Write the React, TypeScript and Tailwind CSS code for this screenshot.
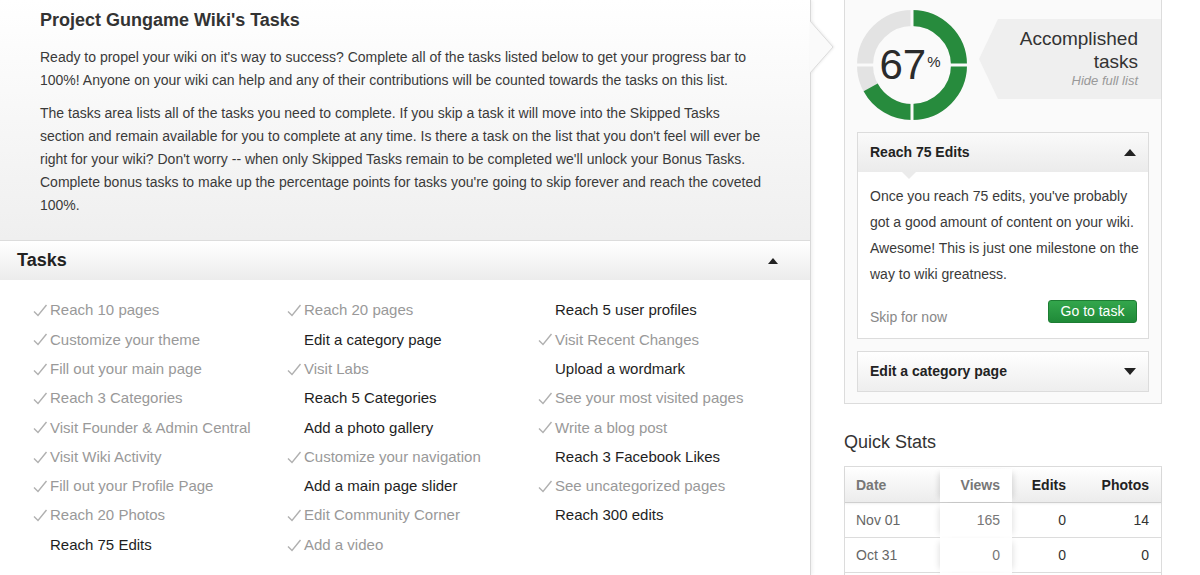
import React from 'react';

type Task = { label: string; done: boolean };

const columns: Task[][] = [
  [
    { label: 'Reach 10 pages', done: true },
    { label: 'Customize your theme', done: true },
    { label: 'Fill out your main page', done: true },
    { label: 'Reach 3 Categories', done: true },
    { label: 'Visit Founder & Admin Central', done: true },
    { label: 'Visit Wiki Activity', done: true },
    { label: 'Fill out your Profile Page', done: true },
    { label: 'Reach 20 Photos', done: true },
    { label: 'Reach 75 Edits', done: false },
  ],
  [
    { label: 'Reach 20 pages', done: true },
    { label: 'Edit a category page', done: false },
    { label: 'Visit Labs', done: true },
    { label: 'Reach 5 Categories', done: false },
    { label: 'Add a photo gallery', done: false },
    { label: 'Customize your navigation', done: true },
    { label: 'Add a main page slider', done: false },
    { label: 'Edit Community Corner', done: true },
    { label: 'Add a video', done: true },
  ],
  [
    { label: 'Reach 5 user profiles', done: false },
    { label: 'Visit Recent Changes', done: true },
    { label: 'Upload a wordmark', done: false },
    { label: 'See your most visited pages', done: true },
    { label: 'Write a blog post', done: true },
    { label: 'Reach 3 Facebook Likes', done: false },
    { label: 'See uncategorized pages', done: true },
    { label: 'Reach 300 edits', done: false },
  ],
];

const stats = [
  { date: 'Nov 01', views: 165, edits: 0, photos: 14 },
  { date: 'Oct 31', views: 0, edits: 0, photos: 0 },
];

function Check() {
  return (
    <svg width="15" height="13" viewBox="0 0 15 13" className="shrink-0">
      <path d="M1 7.5 L5 11.5 L13.5 1" fill="none" stroke="#b0b0b0" strokeWidth="1.4" />
    </svg>
  );
}

function Triangle({ up }: { up: boolean }) {
  return (
    <svg width="12" height="7" viewBox="0 0 12 7">
      <polygon points={up ? '0,7 6,0 12,7' : '0,0 12,0 6,7'} fill="#222" />
    </svg>
  );
}

function Donut() {
  const c = 2 * Math.PI * 47;
  return (
    <div className="relative w-[110px] h-[110px] shrink-0">
      <svg width="110" height="110" viewBox="0 0 110 110">
        <circle cx="55" cy="55" r="47" fill="none" stroke="#e3e3e3" strokeWidth="16" />
        <circle
          cx="55"
          cy="55"
          r="47"
          fill="none"
          stroke="#278b3d"
          strokeWidth="16"
          strokeDasharray={`${c * 0.67} ${c}`}
          transform="rotate(-90 55 55)"
        />
        <rect x="53.5" y="0" width="3" height="110" fill="#fafafa" />
        <rect x="0" y="53.5" width="110" height="3" fill="#fafafa" />
        <circle cx="55" cy="55" r="38" fill="#fafafa" />
      </svg>
      <div className="absolute inset-0 flex items-center justify-center text-[#2b2b2b]">
        <span className="text-[42px] leading-[42px] -ml-[4px]">67</span>
        <span className="text-[15px] leading-[15px] self-start mt-[44px] ml-[1px]">%</span>
      </div>
    </div>
  );
}

export default function App() {
  return (
    <div className="flex w-[1200px] h-[575px] overflow-hidden bg-white font-['Liberation_Sans',Arial,sans-serif] text-[#333]">
      {/* Left: intro + task list */}
      <div className="relative w-[811px] shrink-0 border-r border-[#d8d8d8] shadow-[1px_0_4px_rgba(0,0,0,0.08)]">
        <div className="h-[241px] pl-[40px] pr-[20px] pt-[9px] bg-gradient-to-b from-white to-[#efefef] border-b border-[#dcdcdc]">
          <h1 className="text-[18px] leading-[22px] font-bold text-[#333] mb-[15px]">Project Gungame Wiki's Tasks</h1>
          <p className="text-[14px] leading-[23px] text-[#3a3a3a]">
            Ready to propel your wiki on it's way to success? Complete all of the tasks listed below to get your progress bar to
            <br />
            100%! Anyone on your wiki can help and any of their contributions will be counted towards the tasks on this list.
          </p>
          <p className="text-[14px] leading-[23px] text-[#3a3a3a] mt-[10px]">
            The tasks area lists all of the tasks you need to complete. If you skip a task it will move into the Skipped Tasks
            <br />
            section and remain available for you to complete at any time. Is there a task on the list that you don't feel will ever be
            <br />
            right for your wiki? Don't worry -- when only Skipped Tasks remain to be completed we'll unlock your Bonus Tasks.
            <br />
            Complete bonus tasks to make up the percentage points for tasks you're going to skip forever and reach the coveted
            <br />
            100%.
          </p>
        </div>

        {/* Tasks bar */}
        <div className="h-[39px] flex items-center justify-between pl-[17px] pr-[32px] bg-gradient-to-b from-white to-[#ececec]">
          <h2 className="text-[18px] font-bold text-[#222]">Tasks</h2>
          <svg width="10" height="6" viewBox="0 0 10 6">
            <polygon points="0,6 5,0 10,6" fill="#222" />
          </svg>
        </div>

        <div className="flex pl-[33px] pt-[16px]">
          {columns.map((col, i) => (
            <div key={i} className={i === 0 ? 'w-[254px]' : i === 1 ? 'w-[251px]' : 'flex-1'}>
              {col.map((t) => (
                <div key={t.label} className="h-[29.3px] flex items-center text-[15px]">
                  <span className="w-[17px] shrink-0 flex items-center">{t.done && <Check />}</span>
                  <span className={t.done ? 'text-[#999]' : 'text-[#1e1e1e]'}>{t.label}</span>
                </div>
              ))}
            </div>
          ))}
        </div>

        {/* pointer into the side panel */}
        <svg
          width="24"
          height="52"
          viewBox="0 0 24 52"
          className="absolute left-[810px] top-[21px] drop-shadow-[1px_0_1px_rgba(0,0,0,0.08)]"
        >
          <polygon points="0,0 23,26 0,52" fill="#fafafa" />
          <polyline points="0,0 23,26 0,52" fill="none" stroke="#dcdcdc" strokeWidth="1" />
        </svg>
      </div>

      {/* Right side panel */}
      <div className="ml-[33px] w-[318px] shrink-0">
        <div className="bg-[#fafafa] border border-t-0 border-[#dcdcdc] pb-[11px]">
          <div className="flex items-start pt-[10px] pl-[12px]">
            <Donut />
            <div className="flex-1 ml-[12px] mt-[9px] h-[80px] flex">
              <svg width="19" height="80" viewBox="0 0 19 80" className="shrink-0">
                <polygon points="19,0 0,40 19,80" fill="#efefef" />
              </svg>
              <div className="flex-1 bg-[#efefef] text-right pr-[23px] pt-[8px]">
                <div className="text-[19px] leading-[23px] text-[#333]">Accomplished</div>
                <div className="text-[19px] leading-[23px] text-[#333]">tasks</div>
                <div className="text-[13px] leading-[16px] italic text-[#999]">Hide full list</div>
              </div>
            </div>
          </div>

          {/* Current task */}
          <div className="mx-[12px] mt-[12px] border border-[#dcdcdc] bg-white">
            <div className="relative h-[39px] flex items-center justify-between px-[12px] bg-gradient-to-b from-[#fafafa] to-[#ebebeb]">
              <span className="text-[14px] font-bold text-[#222]">Reach 75 Edits</span>
              <Triangle up />
              <svg width="14" height="7" viewBox="0 0 14 7" className="absolute left-[44px] -bottom-[7px]">
                <polygon points="0,0 14,0 7,7" fill="#ebebeb" />
              </svg>
            </div>
            <div className="pl-[12px] pr-[11px] pt-[11px] pb-[13px]">
              <p className="text-[14px] leading-[26px] text-[#3a3a3a] pr-0 -mr-[6px]">
                Once you reach 75 edits, you've probably got a good amount of content on your wiki. Awesome! This is just one milestone on the way to wiki greatness.
              </p>
              <div className="flex items-start justify-between mt-[13px]">
                <span className="mt-[9px] text-[14px] leading-[16px] text-[#888]">Skip for now</span>
                <button className="w-[89px] h-[23px] rounded-[3px] border border-[#1d7d33] bg-gradient-to-b from-[#33a64c] to-[#1f8a38] text-white text-[14px] leading-[21px]">
                  Go to task
                </button>
              </div>
            </div>
          </div>

          <div className="mx-[12px] mt-[12px] h-[41px] border border-[#dcdcdc] flex items-center justify-between px-[12px] bg-gradient-to-b from-white to-[#eeeeee]">
            <span className="text-[14px] font-bold text-[#222]">Edit a category page</span>
            <Triangle up={false} />
          </div>
        </div>

        <h2 className="mt-[27px] mb-[13px] text-[18px] leading-[22px] text-[#333]">Quick Stats</h2>

        {/* Stats table */}
        <div className="border border-b-0 border-[#dcdcdc] text-[14px]">
          <div className="grid grid-cols-[95px_72px_66px_1fr] h-[36px] pt-[2px] font-bold border-b border-[#cfcfcf] bg-gradient-to-b from-white to-[#ececec] shadow-[0_1px_2px_rgba(0,0,0,0.06)]">
            <div className="flex items-center pl-[11px] text-[#777]">Date</div>
            <div className="flex items-center justify-end pr-[12px] text-[#777] bg-white shadow-[-5px_0_6px_-4px_rgba(0,0,0,0.15),5px_0_6px_-4px_rgba(0,0,0,0.15)]">Views</div>
            <div className="flex items-center justify-end pr-[12px] text-[#222]">Edits</div>
            <div className="flex items-center justify-end pr-[12px] text-[#222]">Photos</div>
          </div>
          {stats.map((s) => (
            <div key={s.date} className="grid grid-cols-[95px_72px_66px_1fr] h-[35px]">
              <div className="flex items-center pl-[11px] text-[#666] border-b border-[#dcdcdc]">{s.date}</div>
              <div className="flex items-center justify-end pr-[12px] text-[#777] bg-white shadow-[-5px_0_6px_-4px_rgba(0,0,0,0.12),5px_0_6px_-4px_rgba(0,0,0,0.12)]">{s.views}</div>
              <div className="flex items-center justify-end pr-[12px] text-[#333] border-b border-[#dcdcdc]">{s.edits}</div>
              <div className="flex items-center justify-end pr-[12px] text-[#333] border-b border-[#dcdcdc]">{s.photos}</div>
            </div>
          ))}
          <div className="grid grid-cols-[95px_72px_66px_1fr] h-[35px]">
            <div />
            <div className="bg-white shadow-[-5px_0_6px_-4px_rgba(0,0,0,0.12),5px_0_6px_-4px_rgba(0,0,0,0.12)]" />
            <div />
            <div />
          </div>
        </div>
      </div>
    </div>
  );
}
